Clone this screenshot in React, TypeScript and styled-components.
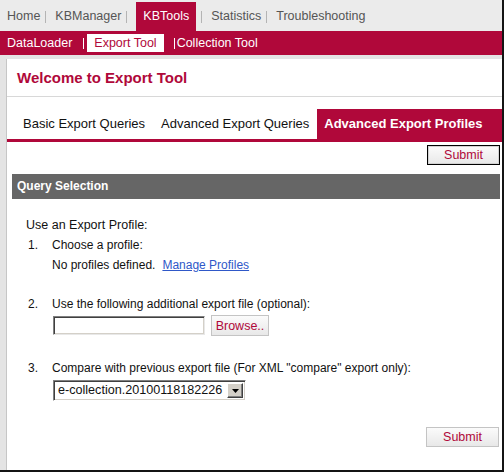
import React from "react";
import styled, { createGlobalStyle } from "styled-components";

const RED = "#b0083a";

const Global = createGlobalStyle`
  html, body { margin: 0; padding: 0; background: #fff; }
  body { font-family: "Liberation Sans", Arial, sans-serif; }
  * { box-sizing: border-box; }
`;

const Frame = styled.div`
  width: 504px;
  height: 472px;
  border-right: 2px solid #141414;
  border-bottom: 2px solid #141414;
  background: #e4e4e4;
  display: flex;
  flex-direction: column;
  overflow: hidden;
`;

const TopNav = styled.nav`
  height: 31px;
  flex: none;
  background: #ebebeb;
  display: flex;
  align-items: flex-end;
  padding-left: 7px;
  font-size: 12.5px;
  color: #555;
`;

const NavItem = styled.span<{ $active?: boolean }>`
  height: 29px;
  line-height: 29px;
  padding: ${(p) => (p.$active ? "0 7px" : "0")};
  background: ${(p) => (p.$active ? RED : "transparent")};
  color: ${(p) => (p.$active ? "#fff" : "#555")};
`;

const NavSep = styled.span`
  width: 1px;
  height: 12px;
  background: #b4b4b4;
  margin: 0 9px 8px 5px;
`;

const SubNav = styled.nav`
  height: 24px;
  flex: none;
  background: ${RED};
  display: flex;
  align-items: center;
  padding-left: 7px;
  font-size: 12.5px;
  color: #fff;
`;

const SubItem = styled.span<{ $active?: boolean }>`
  height: 18px;
  line-height: 18px;
  padding: ${(p) => (p.$active ? "0 7px" : "0")};
  background: ${(p) => (p.$active ? "#fff" : "transparent")};
  color: ${(p) => (p.$active ? RED : "#fff")};
`;

const SubSep = styled.span<{ $l: number; $r: number }>`
  width: 1px;
  height: 11px;
  background: #fff;
  margin: 0 ${(p) => p.$r}px 0 ${(p) => p.$l}px;
`;

const Panel = styled.main`
  flex: 1;
  margin: 4px 0 0 6px;
  border-left: 1px solid #c6c6c6;
  background: #fff;
  display: flex;
  flex-direction: column;
`;

const Title = styled.h1`
  margin: 0;
  height: 38px;
  line-height: 37px;
  padding-left: 10px;
  font-size: 15px;
  font-weight: bold;
  color: ${RED};
  border-bottom: 1px solid #d8d8d8;
`;

const TabRow = styled.div`
  margin-top: 12px;
  height: 33px;
  display: flex;
  padding-left: 8px;
  border-bottom: 3px solid ${RED};
`;

const Tab = styled.div<{ $active?: boolean }>`
  padding: ${(p) => (p.$active ? "0 7px" : "0 8px")};
  line-height: 30px;
  font-size: 13px;
  font-weight: ${(p) => (p.$active ? "bold" : "normal")};
  color: ${(p) => (p.$active ? "#fff" : "#111")};
  background: ${(p) => (p.$active ? RED : "transparent")};
  flex: ${(p) => (p.$active ? 1 : "none")};
  white-space: nowrap;
`;

const ActionBar = styled.div<{ $top: number; $right: number }>`
  display: flex;
  justify-content: flex-end;
  margin-top: ${(p) => p.$top}px;
  padding-right: ${(p) => p.$right}px;
`;

const Button = styled.button<{ $primary?: boolean; $w: number; $h: number }>`
  width: ${(p) => p.$w}px;
  height: ${(p) => p.$h}px;
  padding: 0;
  font-family: "Liberation Sans", Arial, sans-serif;
  font-size: 12.5px;
  color: ${RED};
  background: linear-gradient(#fbfbfb, #e8e8e8);
  border: 1px solid ${(p) => (p.$primary ? "#000" : "#c4c4c4")};
  box-shadow: ${(p) => (p.$primary ? "inset 0 0 0 1px #d2d2d2" : "none")};
  cursor: pointer;
`;

const SectionHeader = styled.h2`
  margin: 9px 2px 0 5px;
  height: 25px;
  line-height: 25px;
  padding-left: 5px;
  background: #666;
  color: #fff;
  font-size: 12px;
  font-weight: bold;
`;

const Body = styled.section`
  padding: 16px 3px 0 19px;
  font-size: 12px;
  line-height: 20px;
  color: #111;
`;

const Lead = styled.div`
  height: 20px;
  font-size: 12.5px;
`;

const Steps = styled.ol`
  list-style: none;
  margin: 0;
  padding: 0 0 0 2px;
`;

const Step = styled.li<{ $gap: number }>`
  display: flex;
  margin-top: ${(p) => p.$gap}px;
`;

const Num = styled.span`
  width: 24px;
  flex: none;
`;

const StepBody = styled.div`
  display: flex;
  flex-direction: column;
`;

const Line = styled.div`
  height: 20px;
  white-space: nowrap;
`;

const Link = styled.a`
  margin-left: 7px;
  color: #2f58c8;
  text-decoration: underline;
`;

const Controls = styled.div`
  display: flex;
  align-items: flex-start;
  margin-top: 1px;
`;

const FileField = styled.input`
  width: 152px;
  height: 19px;
  margin: 1px 6px 0 1px;
  padding: 0 2px;
  border-style: solid;
  border-width: 1px;
  border-color: #808080 #e8e8e8 #e8e8e8 #808080;
  box-shadow: inset 1px 1px 0 #404040, inset -1px -1px 0 #d4d0c8;
  background: #fff;
  outline: none;
`;

const SelectBox = styled.div`
  display: flex;
  width: 193px;
  height: 21px;
  margin: 2px 0 0 1px;
  border-style: solid;
  border-width: 1px;
  border-color: #808080 #fff #fff #808080;
  box-shadow: inset 1px 1px 0 #404040, inset -1px -1px 0 #d4d0c8;
  padding: 2px;
  background: #fff;
`;

const NativeSelect = styled.select`
  appearance: none;
  flex: 1;
  min-width: 0;
  border: none;
  outline: none;
  background: transparent;
  padding: 0 0 0 2px;
  font-family: "Liberation Sans", Arial, sans-serif;
  font-size: 12.6px;
  color: #111;
  line-height: 15px;
`;

const ArrowButton = styled.span`
  width: 16px;
  flex: none;
  display: flex;
  align-items: center;
  justify-content: center;
  background: #d4d0c8;
  border-style: solid;
  border-width: 1px;
  border-color: #fff #404040 #404040 #fff;
  box-shadow: inset -1px -1px 0 #808080;
`;

export default function App() {
  return (
    <>
      <Global />
      <Frame>
        <TopNav>
          <NavItem>Home</NavItem>
          <NavSep />
          <NavItem>KBManager</NavItem>
          <NavSep />
          <NavItem $active>KBTools</NavItem>
          <NavSep />
          <NavItem>Statistics</NavItem>
          <NavSep />
          <NavItem>Troubleshooting</NavItem>
        </TopNav>
        <SubNav>
          <SubItem>DataLoader</SubItem>
          <SubSep $l={11} $r={3} />
          <SubItem $active>Export Tool</SubItem>
          <SubSep $l={10} $r={2} />
          <SubItem>Collection Tool</SubItem>
        </SubNav>
        <Panel>
          <Title>Welcome to Export Tool</Title>
          <TabRow>
            <Tab>Basic Export Queries</Tab>
            <Tab>Advanced Export Queries</Tab>
            <Tab $active>Advanced Export Profiles</Tab>
          </TabRow>
          <ActionBar $top={3} $right={2}>
            <Button $primary $w={73} $h={20}>Submit</Button>
          </ActionBar>
          <SectionHeader>Query Selection</SectionHeader>
          <Body>
            <Lead>Use an Export Profile:</Lead>
            <Steps>
              <Step $gap={0}>
                <Num>1.</Num>
                <StepBody>
                  <Line>Choose a profile:</Line>
                  <Line>
                    No profiles defined.
                    <Link href="#">Manage Profiles</Link>
                  </Line>
                </StepBody>
              </Step>
              <Step $gap={19}>
                <Num>2.</Num>
                <StepBody>
                  <Line>Use the following additional export file (optional):</Line>
                  <Controls>
                    <FileField type="text" />
                    <Button $w={58} $h={21}>Browse..</Button>
                  </Controls>
                </StepBody>
              </Step>
              <Step $gap={22}>
                <Num>3.</Num>
                <StepBody>
                  <Line>Compare with previous export file (For XML "compare" export only):</Line>
                  <SelectBox>
                    <NativeSelect defaultValue="e-collection.20100118182226">
                      <option>e-collection.20100118182226</option>
                    </NativeSelect>
                    <ArrowButton>
                      <svg width="7" height="4" viewBox="0 0 7 4">
                        <path d="M0 0h7L3.5 4z" fill="#000" />
                      </svg>
                    </ArrowButton>
                  </SelectBox>
                </StepBody>
              </Step>
            </Steps>
            <ActionBar $top={26} $right={0}>
              <Button $w={73} $h={20}>Submit</Button>
            </ActionBar>
          </Body>
        </Panel>
      </Frame>
    </>
  );
}
